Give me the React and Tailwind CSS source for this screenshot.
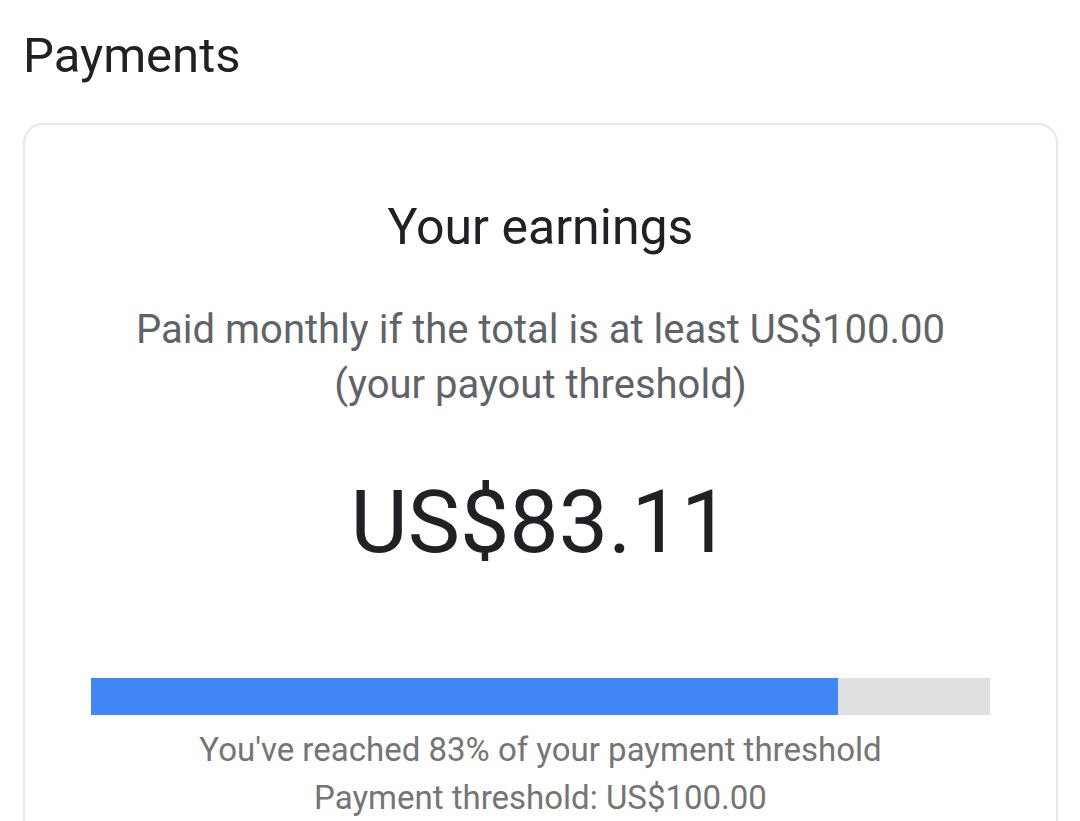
export default function App() {
  const pct = 83.11;
  return (
    <div className="w-[1080px] h-[821px] overflow-hidden bg-white font-['Roboto',sans-serif]">
      <div className="px-[23px] pt-[28px]">
        <h1 className="text-[49px] leading-[56px] text-[#202124] font-normal">Payments</h1>
        <div className="mt-[39px] w-[1035px] h-[800px] rounded-[20px] border-2 border-[#e8e8e8] pt-[74px] flex flex-col items-center">
          <h2 className="text-[50px] leading-[56px] text-[#202124]">Your earnings</h2>
          <p className="mt-[47px] text-[40px] leading-[55px] text-[#5f6368] text-center">
            Paid monthly if the total is at least US$100.00
            <br />
            (your payout threshold)
          </p>
          <div className="mt-[58px] text-[88px] leading-[104px] text-[#202124]">US$83.11</div>
          <div className="mt-[104px] w-[899px] h-[37px] bg-[#e0e0e0]">
            <div className="h-full bg-[#4285f4]" style={{ width: `${pct}%` }} />
          </div>
          <p className="mt-[11px] text-[33px] leading-[48px] text-[#757575] text-center">
            You've reached 83% of your payment threshold
            <br />
            Payment threshold: US$100.00
          </p>
        </div>
      </div>
    </div>
  );
}
